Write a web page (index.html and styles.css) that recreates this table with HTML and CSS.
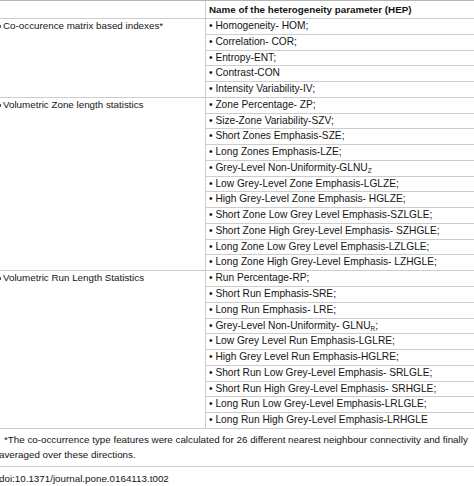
FILE: index.html
```html
<!DOCTYPE html>
<html>
<head>
<meta charset="utf-8">
<link rel="stylesheet" href="styles.css">
</head>
<body>
<div class="hep">
  <div class="head head-l"></div>
  <div class="head head-r">Name of the heterogeneity parameter (HEP)</div>

  <div class="grp span5">Co-occurence matrix based indexes*</div>
  <div class="item">• Homogeneity- HOM;</div>
  <div class="item">• Correlation- COR;</div>
  <div class="item">• Entropy-ENT;</div>
  <div class="item">• Contrast-CON</div>
  <div class="item">• Intensity Variability-IV;</div>

  <div class="grp span11">Volumetric Zone length statistics</div>
  <div class="item">• Zone Percentage- ZP;</div>
  <div class="item">• Size-Zone Variability-SZV;</div>
  <div class="item">• Short Zones Emphasis-SZE;</div>
  <div class="item">• Long Zones Emphasis-LZE;</div>
  <div class="item">• Grey-Level Non-Uniformity-GLNU<sub>Z</sub></div>
  <div class="item">• Low Grey-Level Zone Emphasis-LGLZE;</div>
  <div class="item">• High Grey-Level Zone Emphasis- HGLZE;</div>
  <div class="item">• Short Zone Low Grey Level Emphasis-SZLGLE;</div>
  <div class="item">• Short Zone High Grey-Level Emphasis- SZHGLE;</div>
  <div class="item">• Long Zone Low Grey Level Emphasis-LZLGLE;</div>
  <div class="item">• Long Zone High Grey-Level Emphasis- LZHGLE;</div>

  <div class="grp span10">Volumetric Run Length Statistics</div>
  <div class="item">• Run Percentage-RP;</div>
  <div class="item">• Short Run Emphasis-SRE;</div>
  <div class="item">• Long Run Emphasis- LRE;</div>
  <div class="item">• Grey-Level Non-Uniformity- GLNU<sub>R</sub>;</div>
  <div class="item">• Low Grey Level Run Emphasis-LGLRE;</div>
  <div class="item">• High Grey Level Run Emphasis-HGLRE;</div>
  <div class="item">• Short Run Low Grey-Level Emphasis- SRLGLE;</div>
  <div class="item">• Short Run High Grey-Level Emphasis- SRHGLE;</div>
  <div class="item">• Long Run Low Grey-Level Emphasis-LRLGLE;</div>
  <div class="item">• Long Run High Grey-Level Emphasis-LRHGLE</div>
</div>
<p class="note">*The co-occurrence type features were calculated for 26 different nearest neighbour connectivity and finally averaged over these directions.</p>
<p class="doi">doi:10.1371/journal.pone.0164113.t002</p>
</body>
</html>
```
FILE: styles.css
```css
html, body {
  margin: 0;
  padding: 0;
  background: #ffffff;
  overflow: hidden;
}
body {
  width: 474px;
  font-family: "Liberation Sans", Arial, sans-serif;
  font-size: 9.8px;
  color: #141414;
}
.hep {
  display: grid;
  grid-template-columns: 205px 1fr;
  grid-template-rows: 18px;
  grid-auto-rows: 15.77px;
  border-top: 1px solid #b5b5b5;
}
.hep > div {
  box-sizing: border-box;
  border-bottom: 1px solid #cdcdcd;
  white-space: nowrap;
}
.head {
  font-weight: bold;
  line-height: 17px;
}
.head-r, .item {
  grid-column: 2;
  border-left: 1px solid #cdcdcd;
  padding-left: 3px;
}
.item {
  font-size: 10.2px;
  line-height: 14.77px;
}
.grp {
  grid-column: 1;
  position: relative;
  padding-left: 3px;
  line-height: 14.77px;
}
.grp::before {
  content: "";
  position: absolute;
  left: 0;
  top: 6px;
  width: 1px;
  height: 3px;
  background: #555555;
}
.span5 { grid-row: span 5; }
.span11 { grid-row: span 11; }
.span10 { grid-row: span 10; }
sub {
  font-size: 6.5px;
  line-height: 0;
  vertical-align: -2px;
}
.note {
  margin: 0;
  padding: 3.5px 0 4px 0;
  margin-left: -1px;
  text-indent: 5px;
  line-height: 15px;
  border-bottom: 1px solid #cdcdcd;
}
.doi {
  margin: 0;
  margin-left: -1px;
  padding-top: 3.5px;
  line-height: 15px;
}
```
